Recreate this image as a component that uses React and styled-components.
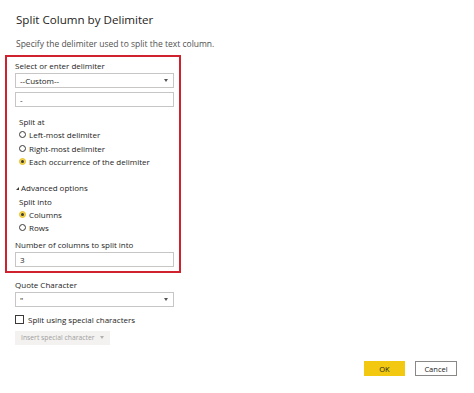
import React from "react";
import styled, { createGlobalStyle } from "styled-components";

const Global = createGlobalStyle`
	html, body {
		margin: 0;
		padding: 0;
		background: #fff;
	}
	body {
		font-family: "Segoe UI", "Open Sans", "Noto Sans", sans-serif;
		color: #252423;
	}
`;

const Dialog = styled.div`
	width: 474px;
	height: 393px;
	box-sizing: border-box;
	padding: 8px 0 0 16px;
	position: relative;
	background: #fff;
`;

const Title = styled.h1`
	margin: 0;
	font-size: 11.6px;
	font-weight: 400;
	line-height: 24px;
	color: #252423;
`;

const Subtitle = styled.p`
	margin: 5px 0 0;
	font-size: 8.5px;
	line-height: 13px;
	color: #505050;
`;

const Highlight = styled.div`
	margin: 5px 0 0 -11px;
	width: 176px;
	box-sizing: border-box;
	border: 2px solid #d0212f;
	padding: 2px 6px 4px 8px;
`;

const Indent = styled.div`
	margin-left: 4px;
`;

const Label = styled.div`
	font-size: 8px;
	line-height: 13px;
	color: #252423;
	margin-top: ${(p) => p.$top || 0}px;
`;

const Field = styled.div`
	height: 15px;
	width: 159px;
	box-sizing: border-box;
	border: 1px solid #c8c6c4;
	background: #fff;
	margin-top: ${(p) => p.$top || 0}px;
	display: flex;
	align-items: center;
	justify-content: space-between;
	padding: 0 5px 0 4px;
	font-size: 8px;
	color: #252423;
`;

const Caret = styled.span`
	width: 0;
	height: 0;
	border-left: 2px solid transparent;
	border-right: 2px solid transparent;
	border-top: 3px solid #555;
`;

const RadioRow = styled.label`
	display: flex;
	align-items: center;
	gap: 3px;
	height: 13.5px;
	font-size: 8px;
	color: #252423;
`;

const Dot = styled.span`
	width: 7px;
	height: 7px;
	box-sizing: border-box;
	border-radius: 50%;
	border: 1px solid ${(p) => (p.$on ? "#e8c12a" : "#3b3a39")};
	background: ${(p) => (p.$on ? "#f2d34a" : "#fff")};
	display: flex;
	align-items: center;
	justify-content: center;
	&::after {
		content: "";
		width: 3px;
		height: 3px;
		border-radius: 50%;
		background: ${(p) => (p.$on ? "#3b3a39" : "transparent")};
	}
`;

const Toggle = styled.div`
	display: flex;
	align-items: center;
	gap: 2px;
	font-size: 8px;
	line-height: 13px;
	margin-top: 12px;
	padding-left: 1px;
	&::before {
		content: "";
		width: 0;
		height: 0;
		border-left: 3px solid transparent;
		border-bottom: 3px solid #3b3a39;
		margin-top: 2px;
	}
`;

const Outside = styled.div`
	margin-left: -1px;
`;

const CheckRow = styled.label`
	display: flex;
	align-items: center;
	gap: 4px;
	margin-top: 7px;
	font-size: 8px;
	color: #252423;
`;

const Box = styled.span`
	width: 7px;
	height: 7px;
	border: 1px solid #3b3a39;
	background: #fff;
`;

const GrayButton = styled.div`
	margin-top: 6px;
	width: 95px;
	height: 14px;
	box-sizing: border-box;
	background: #f3f2f1;
	color: #a19f9d;
	font-size: 6.8px;
	white-space: nowrap;
	display: flex;
	align-items: center;
	gap: 5px;
	padding-left: 6px;
`;

const GrayCaret = styled(Caret)`
	border-top-color: #b3b0ad;
`;

const Footer = styled.div`
	position: absolute;
	right: 17px;
	bottom: 17px;
	display: flex;
	gap: 10px;
`;

const Button = styled.div`
	height: 15px;
	width: ${(p) => p.$width}px;
	box-sizing: border-box;
	display: flex;
	align-items: center;
	justify-content: center;
	font-size: 7.5px;
	color: #252423;
	background: ${(p) => (p.$primary ? "#f2c811" : "#fff")};
	border: 1px solid ${(p) => (p.$primary ? "#f2c811" : "#8a8886")};
`;

const App = () => {
	return (
		<Dialog>
			<Global />
			<Title>Split Column by Delimiter</Title>
			<Subtitle>Specify the delimiter used to split the text column.</Subtitle>
			<Highlight>
				<Label>Select or enter delimiter</Label>
				<Field $top={1}>
					<span>--Custom--</span>
					<Caret />
				</Field>
				<Field $top={4}>
					<span>-</span>
				</Field>
				<Indent>
					<Label $top={8}>Split at</Label>
					<RadioRow>
						<Dot />
						Left-most delimiter
					</RadioRow>
					<RadioRow>
						<Dot />
						Right-most delimiter
					</RadioRow>
					<RadioRow>
						<Dot $on />
						Each occurrence of the delimiter
					</RadioRow>
				</Indent>
				<Toggle>Advanced options</Toggle>
				<Indent>
					<Label $top={1}>Split into</Label>
					<RadioRow>
						<Dot $on />
						Columns
					</RadioRow>
					<RadioRow>
						<Dot />
						Rows
					</RadioRow>
				</Indent>
				<Label $top={3}>Number of columns to split into</Label>
				<Field $top={1}>
					<span>3</span>
				</Field>
			</Highlight>
			<Outside>
				<Label $top={5}>Quote Character</Label>
				<Field $top={1}>
					<span>"</span>
					<Caret />
				</Field>
				<CheckRow>
					<Box />
					Split using special characters
				</CheckRow>
				<GrayButton>
					Insert special character
					<GrayCaret />
				</GrayButton>
			</Outside>
			<Footer>
				<Button $primary $width={41}>
					OK
				</Button>
				<Button $width={42}>Cancel</Button>
			</Footer>
		</Dialog>
	);
};

export default App;
